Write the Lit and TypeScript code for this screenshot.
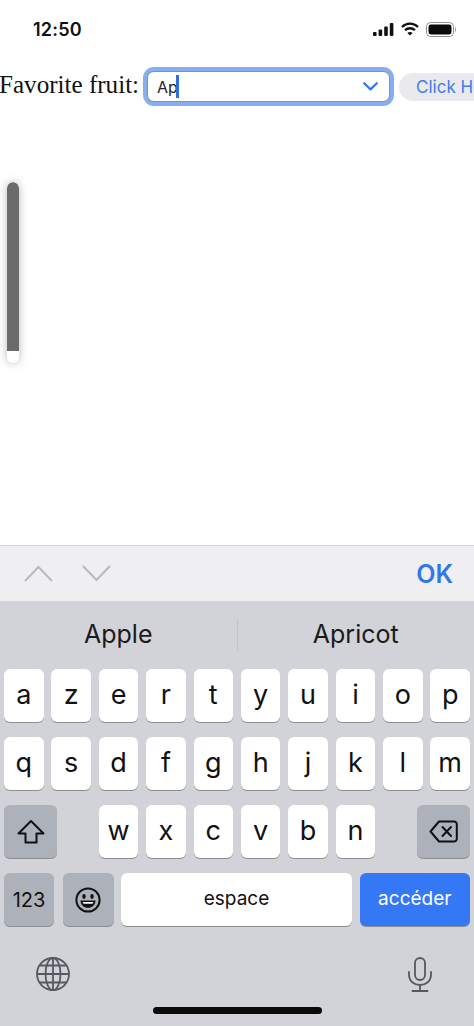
import { LitElement, html, css } from "lit";
import { customElement } from "lit/decorators.js";

const ROW1 = ["a", "z", "e", "r", "t", "y", "u", "i", "o", "p"];
const ROW2 = ["q", "s", "d", "f", "g", "h", "j", "k", "l", "m"];
const ROW3 = ["w", "x", "c", "v", "b", "n"];

@customElement("app-root")
export class AppRoot extends LitElement {
  static styles = css`
    :host {
      display: block;
      width: 474px;
      height: 1026px;
      overflow: hidden;
      background: #fff;
      font-family: Inter, "Liberation Sans", sans-serif;
      color: #111;
    }
    .screen { display: flex; flex-direction: column; height: 1026px; width: 474px; overflow: hidden; }
    .status { height: 58px; flex: none; display: flex; align-items: center; justify-content: space-between; padding: 0 17px 0 33px; box-sizing: border-box; }
    .time { font-size: 18px; font-weight: 600; letter-spacing: 0.2px; color: #111; }
    .status-icons { display: flex; align-items: center; gap: 7px; }
    .status-icons svg { display: block; }
    .form { flex: none; display: flex; align-items: center; height: 57px; white-space: nowrap; margin-left: -1px; }
    .label { font-family: "Liberation Serif", serif; font-size: 25.1px; color: #111; flex: none; margin-top: -4px; }
    .select {
      flex: none; box-sizing: border-box; width: 243px; height: 31px; margin-left: 8px;
      border: 1.5px solid #8c8f96; border-radius: 7px; background: #fff;
      box-shadow: 0 0 0 4px #86aef0;
      display: flex; align-items: center; justify-content: space-between; padding: 0 11px 0 9px;
    }
    .value { display: flex; align-items: center; font-size: 16px; color: #222; }
    .caret { width: 3px; height: 23px; background: #2f6fdc; margin-left: -2px; }
    .btn {
      flex: none; margin-left: 9px; height: 28px; width: 130px; box-sizing: border-box;
      border-radius: 14px; background: #e9e9ee; color: #3d7fe6; font-size: 17px;
      padding-left: 17px; display: flex; align-items: center;
    }
    .page { flex: 1; padding: 67px 0 0 7px; min-height: 0; }
    .scroll {
      width: 12px; height: 181px; border-radius: 6px; overflow: hidden;
      background: #fff; box-shadow: 0 0 10px rgba(0,0,0,0.28);
    }
    .thumb { height: 169px; background: #6b6b6b; border-radius: 6px 6px 0 0; }
    .toolbar {
      flex: none; height: 56px; box-sizing: border-box; border-top: 1px solid #d2d3d6; background: #efeff2;
      display: flex; align-items: center; padding: 0 21px 0 24px; justify-content: space-between;
    }
    .chevs { display: flex; gap: 29px; }
    .chevs svg { display: block; }
    .ok { color: #2f78e8; font-size: 25px; font-weight: 600; }
    .kb { flex: none; height: 425px; background: #d1d3d9; display: flex; flex-direction: column; box-sizing: border-box; }
    .sugg { height: 67px; display: flex; align-items: center; flex: none; }
    .sugg span { flex: 1; text-align: center; font-size: 25px; color: #1a1a1a; padding-bottom: 1px; }
    .sugg i { width: 1px; height: 32px; background: #c2c4ca; flex: none; }
    .rows { display: flex; flex-direction: column; gap: 15px; padding: 1px 4px 0; }
    .row { display: flex; gap: 7.8px; height: 53px; }
    .row.between { justify-content: space-between; }
    .group { display: flex; gap: 7.8px; }
    .key {
      flex: 1; background: #fff; border-radius: 6px; box-shadow: 0 1px 0 #8d8e92;
      display: flex; align-items: center; justify-content: center;
      font-size: 27px; color: #111; padding-bottom: 3px; box-sizing: border-box;
    }
    .group .key { flex: none; width: 39.6px; }
    .dark { background: #adb1ba; }
    .fn { flex: none; padding-bottom: 0; }
    .shift { width: 53px; }
    .n123 { width: 50px; font-size: 20px; margin-right: 1.2px; }
    .emoji { width: 51px; margin-right: -0.8px; }
    .space { width: 231px; font-size: 19px; flex: none; padding-bottom: 2px; }
    .go { width: 110px; background: #3478f6; color: #fff; font-size: 19px; flex: none; padding-bottom: 2px; }
    .bottom { flex: none; display: flex; justify-content: space-between; align-items: flex-start; padding: 31px 42px 0 36px; }
    .bottom svg { display: block; }
    .home-wrap { display: flex; justify-content: center; }
    .home { width: 169px; height: 7px; border-radius: 4px; background: #0a0a0a; margin-top: 15px; }
  `;

  private key(k: string) {
    return html`<div class="key">${k}</div>`;
  }

  render() {
    return html`
      <div class="screen">
        <div class="status">
          <span class="time">12:50</span>
          <div class="status-icons">
            <svg width="21" height="13" viewBox="0 0 21 13" fill="#111">
              <rect x="0" y="9" width="3.6" height="4" rx="1"/>
              <rect x="5.6" y="6.5" width="3.6" height="6.5" rx="1"/>
              <rect x="11.2" y="3.5" width="3.6" height="9.5" rx="1"/>
              <rect x="16.8" y="0" width="3.6" height="13" rx="1"/>
            </svg>
            <svg width="18" height="14" viewBox="0 0 18 14" fill="none" stroke="#111" stroke-width="2.3">
              <path d="M1 5 C5.5 0.6 12.5 0.6 17 5"/>
              <path d="M4 8.2 C6.8 5.6 11.2 5.6 14 8.2"/>
              <path d="M9 13.6 L6.4 11 C7.9 9.7 10.1 9.7 11.6 11 Z" fill="#111" stroke="none"/>
            </svg>
            <svg width="31" height="15" viewBox="0 0 31 15">
              <rect x="0.5" y="0.5" width="27" height="14" rx="4" fill="none" stroke="#8f8f8f"/>
              <rect x="2.5" y="2.5" width="23" height="10" rx="2.4" fill="#0a0a0a"/>
              <path d="M29 5 C30.4 5.6 30.4 9.4 29 10 Z" fill="#999"/>
            </svg>
          </div>
        </div>
        <div class="form">
          <span class="label">Favorite fruit:</span>
          <div class="select">
            <span class="value">Ap<span class="caret"></span></span>
            <svg width="15" height="9" viewBox="0 0 15 9" fill="none" stroke="#2f78e8" stroke-width="2.2" stroke-linecap="round" stroke-linejoin="round"><path d="M1.2 1.2 L7.5 7.4 L13.8 1.2"/></svg>
          </div>
          <div class="btn">Click Here</div>
        </div>
        <div class="page">
          <div class="scroll"><div class="thumb"></div></div>
        </div>
        <div class="toolbar">
          <div class="chevs">
            <svg width="29" height="17" viewBox="0 0 29 17" fill="none" stroke="#b9babd" stroke-width="2"><path d="M1 16 L14.5 2 L28 16"/></svg>
            <svg width="29" height="17" viewBox="0 0 29 17" fill="none" stroke="#b9babd" stroke-width="2"><path d="M1 1 L14.5 15 L28 1"/></svg>
          </div>
          <span class="ok">OK</span>
        </div>
        <div class="kb">
          <div class="sugg"><span>Apple</span><i></i><span>Apricot</span></div>
          <div class="rows">
            <div class="row">${ROW1.map((k) => this.key(k))}</div>
            <div class="row">${ROW2.map((k) => this.key(k))}</div>
            <div class="row between">
              <div class="key dark fn shift">
                <svg width="28" height="26" viewBox="0 0 28 26" fill="none" stroke="#111" stroke-width="2" stroke-linejoin="round"><path d="M14 2 L26.5 14.5 H19.5 V23.5 H8.5 V14.5 H1.5 Z"/></svg>
              </div>
              <div class="group">${ROW3.map((k) => this.key(k))}</div>
              <div class="key dark fn shift">
                <svg width="29" height="23" viewBox="0 0 29 23" fill="none" stroke="#111" stroke-width="2" stroke-linejoin="round" stroke-linecap="round"><path d="M10 1.5 H25 A2.8 2.8 0 0 1 27.8 4.3 V18.7 A2.8 2.8 0 0 1 25 21.5 H10 L1.5 11.5 Z"/><path d="M13.5 7 L22 16 M22 7 L13.5 16"/></svg>
              </div>
            </div>
            <div class="row">
              <div class="key dark fn n123">123</div>
              <div class="key dark fn emoji">
                <svg width="26" height="26" viewBox="0 0 26 26" fill="none"><circle cx="13" cy="13" r="11.6" stroke="#111" stroke-width="2"/><ellipse cx="9" cy="9.5" rx="1.7" ry="2.4" fill="#111"/><ellipse cx="17" cy="9.5" rx="1.7" ry="2.4" fill="#111"/><path d="M5.5 13.5 H20.5 C20.5 18 17.2 20.8 13 20.8 C8.8 20.8 5.5 18 5.5 13.5 Z" fill="#111"/><path d="M7.6 15 H18.4 C18 16 17.8 16.4 17.4 16.8 H8.6 C8.2 16.4 8 16 7.6 15 Z" fill="#fff"/></svg>
              </div>
              <div class="key space">espace</div>
              <div class="key go">accéder</div>
            </div>
          </div>
          <div class="bottom">
            <svg width="34" height="34" viewBox="0 0 34 34" fill="none" stroke="#555960" stroke-width="1.8">
              <circle cx="17" cy="17" r="16"/>
              <ellipse cx="17" cy="17" rx="7.5" ry="16"/>
              <path d="M17 1 V33 M1 17 H33 M4 8.5 H30 M4 25.5 H30"/>
            </svg>
            <svg width="24" height="35" viewBox="0 0 24 35" fill="none" stroke="#555960" stroke-width="1.8" stroke-linecap="round">
              <rect x="7" y="1" width="10" height="22" rx="5"/>
              <path d="M1 15 V18 C1 24 6 28 12 28 C18 28 23 24 23 18 V15"/>
              <path d="M12 28 V34 M4.5 34 H19.5"/>
            </svg>
          </div>
          <div class="home-wrap"><div class="home"></div></div>
        </div>
      </div>
    `;
  }
}
